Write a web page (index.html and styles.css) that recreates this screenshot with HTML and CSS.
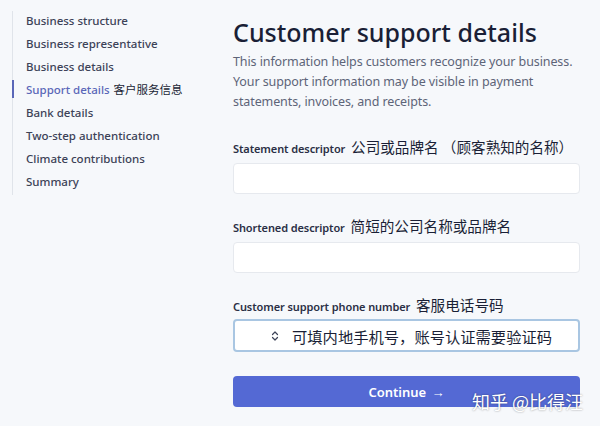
FILE: index.html
```html
<!DOCTYPE html>
<html lang="zh-CN">
<head>
    <meta charset="UTF-8">
    <meta name="viewport" content="width=device-width, initial-scale=1.0">
    <title>Customer support details</title>
    <link rel="stylesheet" href="styles.css">
</head>
<body>

    <div class="page">
        <nav class="steps">
            <a class="step">Business structure</a>
            <a class="step">Business representative</a>
            <a class="step">Business details</a>
            <a class="step active">Support details <span class="note">客户服务信息</span></a>
            <a class="step">Bank details</a>
            <a class="step">Two-step authentication</a>
            <a class="step">Climate contributions</a>
            <a class="step">Summary</a>
        </nav>

        <main class="content">
            <h1>Customer support details</h1>
            <p class="intro">This information helps customers recognize your business. Your support information may be visible in payment statements, invoices, and receipts.</p>

            <form class="support-form">
                <div class="field">
                    <label for="descriptor">Statement descriptor <span class="hint">公司或品牌名 （顾客熟知的名称）</span></label>
                    <input type="text" id="descriptor">
                </div>

                <div class="field">
                    <label for="short">Shortened descriptor <span class="hint">简短的公司名称或品牌名</span></label>
                    <input type="text" id="short">
                </div>

                <div class="field">
                    <label for="phone">Customer support phone number <span class="hint">客服电话号码</span></label>
                    <div class="phone-box">
                        <svg class="chevrons" width="8" height="12" viewBox="0 0 8 12">
                            <path d="M1.5 4.5 L4 2 L6.5 4.5 M1.5 7.5 L4 10 L6.5 7.5" fill="none" stroke="#3c4257" stroke-width="1.2" stroke-linecap="round" stroke-linejoin="round"/>
                        </svg>
                        <span class="phone-text">可填内地手机号，账号认证需要验证码</span>
                    </div>
                </div>

                <button type="submit">Continue <span class="arrow">&rarr;</span></button>
            </form>
        </main>
    </div>

    <div class="watermark">知乎 @比得汪</div>

</body>
</html>
```

FILE: styles.css
```css
body {
    margin: 0;
    font-family: "Noto Sans", "Noto Sans CJK SC", sans-serif;
    background-color: #f6f8fb;
    color: #3c4257;
    height: 426px;
    overflow: hidden;
}

.page {
    display: flex;
    padding-left: 12px;
}

.steps {
    display: flex;
    flex-direction: column;
    flex-shrink: 0;
    width: 220px;
    margin-top: 11px;
    align-self: flex-start;
    border-left: 1px solid #e0e4ea;
}

.step {
    display: block;
    flex-shrink: 0;
    height: 23px;
    line-height: 20px;
    padding-left: 12px;
    font-size: 11.5px;
    font-weight: 500;
    color: #3c4257;
    margin-left: -1px;
    border-left: 2px solid transparent;
}

.step.active {
    color: #5a67b8;
    border-left-color: #5a67b8;
    height: 18px;
    margin-bottom: 5px;
}

.note {
    color: #1a1f36;
    font-family: "Noto Sans CJK SC", sans-serif;
    font-weight: 400;
    margin-left: 1px;
    line-height: 1;
}

.content {
    width: 347px;
    padding-top: 15px;
}

h1 {
    margin: 0;
    font-size: 25px;
    font-weight: 500;
    color: #1a1f36;
    line-height: 34px;
}

.intro {
    margin: 3px 0 0;
    font-size: 12.5px;
    line-height: 20px;
    color: #5d6478;
    letter-spacing: -0.1px;
}

.support-form {
    display: flex;
    flex-direction: column;
    margin-top: 26px;
}

.field {
    display: flex;
    flex-direction: column;
    margin-bottom: 23px;
}

.field label {
    display: block;
    height: 22px;
    font-size: 11px;
    font-weight: 600;
    color: #2a2f45;
    line-height: 22px;
    margin-bottom: 3px;
    white-space: nowrap;
    letter-spacing: -0.1px;
}

.hint {
    font-family: "Noto Sans CJK SC", sans-serif;
    font-size: 14.6px;
    font-weight: 400;
    line-height: 1;
    color: #1a1f36;
    margin-left: 3px;
    letter-spacing: 0;
}

.field input {
    height: 31px;
    box-sizing: border-box;
    border: 1px solid #e6e9ee;
    border-radius: 4px;
    background: #fff;
}

.phone-box {
    display: flex;
    align-items: center;
    height: 33px;
    box-sizing: border-box;
    border: 2px solid #a9c6e2;
    border-radius: 4px;
    background: #fff;
    padding-left: 36px;
}

.chevrons {
    margin-right: 13px;
}

.phone-text {
    font-family: "Noto Sans CJK SC", sans-serif;
    font-size: 15.3px;
    color: #1a1f36;
}

.field:nth-child(3) {
    margin-bottom: 24px;
}

.field:nth-child(3) label {
    margin-bottom: 1px;
}

button {
    height: 31px;
    background-color: #5469d4;
    color: #fff;
    border: none;
    border-radius: 4px;
    font-family: "Noto Sans", sans-serif;
    font-size: 13px;
    font-weight: 600;
}

.arrow {
    margin-left: 2px;
}

.watermark {
    position: absolute;
    left: 472px;
    top: 388px;
    font-family: "Noto Sans CJK SC", sans-serif;
    font-size: 18px;
    color: #fff;
    text-shadow: 0 0 2px rgba(0, 0, 0, 0.45);
}
```
